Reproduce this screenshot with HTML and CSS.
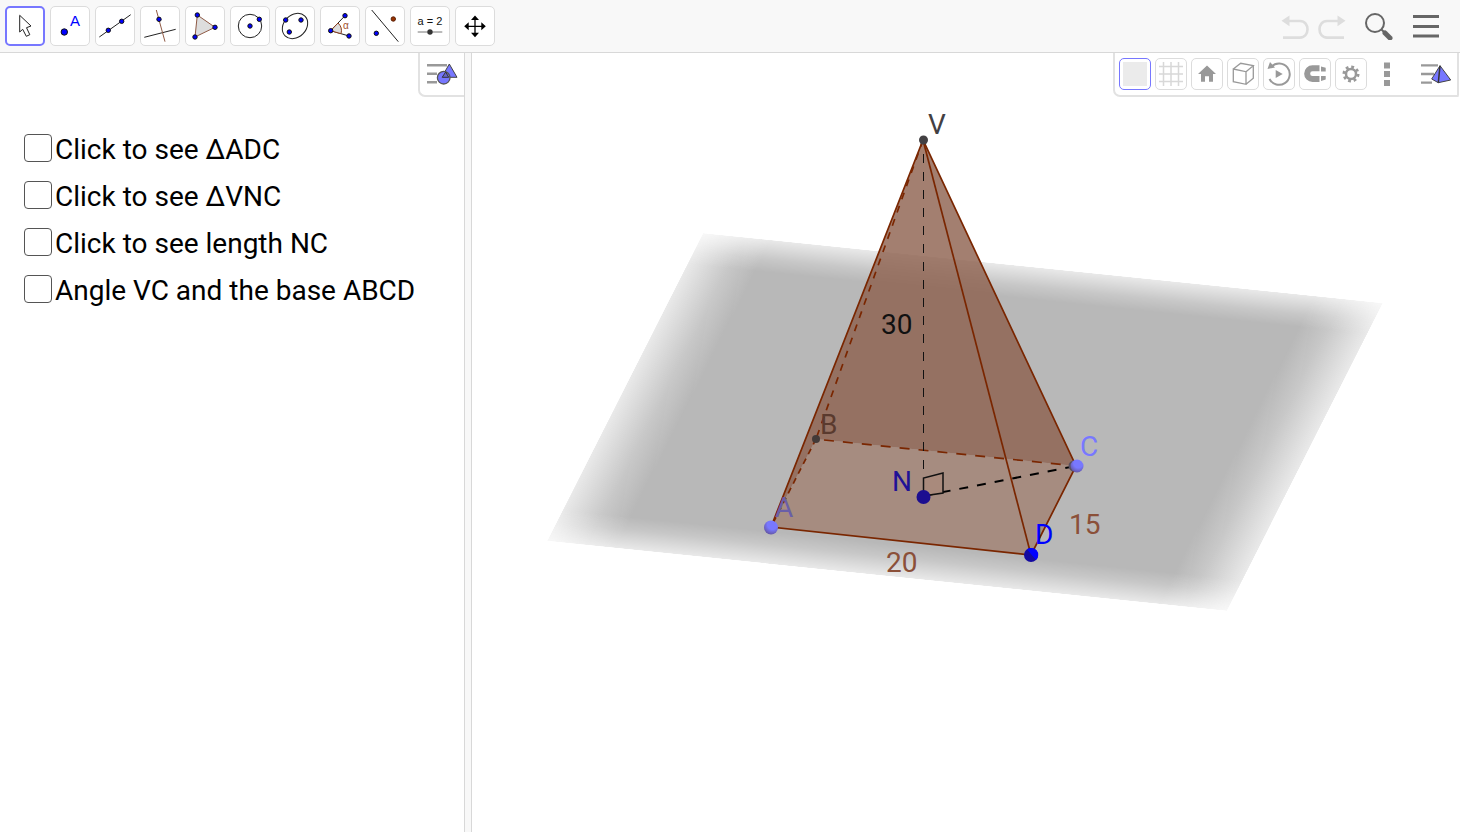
FILE: index.html
```html
<!DOCTYPE html>
<html lang="en">
<head>
  <meta charset="UTF-8" />
  <title>Pyramid VABCD</title>
  <link rel="stylesheet" href="styles.css">
</head>
<body>

  <header class="toolbar">
    <div class="tools">
      <button type="button" class="tool selected" aria-label="Move">
        <svg viewBox="4 4 32 32"><path d="M14.7 9.3V26l3-2.7 3.6 7 3.5-1.6-3.3-7L26 20z" fill="#fff" stroke="#222"/></svg>
      </button>
      <button type="button" class="tool" aria-label="Point">
        <svg viewBox="4 4 32 32"><circle class="pt" cx="14.3" cy="26" r="3.2"/><text x="20" y="20" font-size="15" fill="#00f">A</text></svg>
      </button>
      <button type="button" class="tool" aria-label="Line">
        <svg viewBox="4 4 32 32"><path class="ln" d="M4.3 31 35.7 8.7"/><circle class="pt" cx="13.3" cy="24.3" r="2.2"/><circle class="pt" cx="26.7" cy="15.3" r="2.2"/></svg>
      </button>
      <button type="button" class="tool" aria-label="Perpendicular line">
        <svg viewBox="4 4 32 32"><path class="ln" d="M4.3 31.3 35.7 23.3"/><path class="ln brown" d="M16.3 4 25 35.7"/><circle class="pt" cx="19" cy="13.3" r="2.2"/></svg>
      </button>
      <button type="button" class="tool" aria-label="Polygon">
        <svg viewBox="4 4 32 32"><path class="ln brown filled" d="M12.3 9 30 21.3 10 31z"/><circle class="pt" cx="12.3" cy="9" r="2.2"/><circle class="pt" cx="30" cy="21.3" r="2.2"/><circle class="pt" cx="10" cy="31" r="2.2"/></svg>
      </button>
      <button type="button" class="tool" aria-label="Circle">
        <svg viewBox="4 4 32 32"><circle class="ln" cx="20" cy="20" r="11.7"/><circle class="pt" cx="20" cy="20" r="2.2"/><circle class="pt" cx="29.3" cy="13.3" r="2.2"/></svg>
      </button>
      <button type="button" class="tool" aria-label="Ellipse">
        <svg viewBox="4 4 32 32"><ellipse class="ln" cx="20" cy="20" rx="14" ry="11.2" transform="rotate(-45 20 20)"/><circle class="pt" cx="10.7" cy="14" r="2.2"/><circle class="pt" cx="26" cy="14" r="2.2"/><circle class="pt" cx="14.3" cy="26" r="2.2"/></svg>
      </button>
      <button type="button" class="tool" aria-label="Angle">
        <svg viewBox="4 4 32 32"><path class="ln" d="M25 9.7 10.7 24.7 29 30"/><path d="M10.7 24.7 18 17a10.7 10.7 0 0 1 3 10.7z" fill="#ddd" stroke="#8a3c1c"/><circle class="pt" cx="10.7" cy="24.7" r="2.2"/><circle class="pt" cx="25" cy="9.7" r="2.2"/><circle class="pt" cx="29" cy="30" r="2.2"/><text x="23" y="23" font-size="10" fill="#a0522d">α</text></svg>
      </button>
      <button type="button" class="tool" aria-label="Reflect about line">
        <svg viewBox="4 4 32 32"><path class="ln" d="M6.7 4 33.3 35.7"/><circle class="pt" cx="11.3" cy="27.3" r="2.2"/><circle cx="28.3" cy="13" r="2.2" fill="#993300" stroke="#5a2008"/></svg>
      </button>
      <button type="button" class="tool" aria-label="Slider">
        <svg viewBox="4 4 32 32"><text x="20" y="19" font-size="11" text-anchor="middle" fill="#111">a = 2</text><path d="M7.7 26h24.6" stroke="#777"/><circle cx="20" cy="26" r="2.7" fill="#333"/></svg>
      </button>
      <button type="button" class="tool" aria-label="Move graphics view">
        <svg viewBox="4 4 32 32"><path d="M20 12v17M12 20.3h16" stroke="#000" stroke-width="1.3"/><path d="M20 9.5l4 4.5h-8zM20 31.2l4-4.5h-8zM9.2 20.3l4.5-4v8zM30.8 20.3l-4.5-4v8z"/></svg>
      </button>
    </div>

    <nav class="menu">
      <button type="button" class="undo" aria-label="Undo">
        <svg viewBox="0 0 28 28"><path d="M8 9h11c10 0 10 16.600 0 16.600H2" fill="none" stroke="#ddd" stroke-width="2.600"/><path d="M0.500 8.700 8.500 3.500v10.700z" fill="#ddd"/></svg>
      </button>
      <button type="button" class="redo" aria-label="Redo">
        <svg viewBox="0 0 28 28"><path d="M20 9H9c-10 0-10 16.600 0 16.600h17" fill="none" stroke="#ddd" stroke-width="2.600"/><path d="M27.500 8.700 19.500 3.500v10.700z" fill="#ddd"/></svg>
      </button>
      <button type="button" class="search" aria-label="Search">
        <svg viewBox="0 0 28 28"><circle cx="10" cy="11" r="9" fill="none" stroke="#666" stroke-width="2"/><path d="M16.500 17.500l4 4" stroke="#666" stroke-width="2"/><path d="M20 21l5 5" stroke="#666" stroke-width="5" stroke-linecap="round"/></svg>
      </button>
      <button type="button" class="main-menu" aria-label="Menu">
        <svg viewBox="0 0 28 28"><path d="M1 4.500h26M1 14.500h26M1 24h26" stroke="#666" stroke-width="3"/></svg>
      </button>
    </nav>
  </header>

  <main class="views">
    <section class="pane graphics">
      <div class="stylebar-small">
        <button type="button" class="style-btn" aria-label="Graphics style bar">
          <svg viewBox="0 0 32 32">
            <path d="M0 7.300h20M0 15.700h10M0 24.300h10" stroke="#999" stroke-width="2.600"/>
            <path d="M22.300 6 30 19.300H14.700z" fill="#7777ff" stroke="#444"/>
            <circle cx="16.700" cy="19.700" r="6.300" fill="#7777ff" stroke="#555" stroke-width="1.300"/>
            <path d="M18.700 14l3 5.300h-6.500z" fill="#6666cc" stroke="#333"/>
          </svg>
        </button>
      </div>
      <form class="checks">
        <label class="check"><input type="checkbox"><span>Click to see ΔADC</span></label>
        <label class="check"><input type="checkbox"><span>Click to see ΔVNC</span></label>
        <label class="check"><input type="checkbox"><span>Click to see length NC</span></label>
        <label class="check"><input type="checkbox"><span>Angle VC and the base ABCD</span></label>
      </form>
    </section>

    <div class="splitter"></div>

    <section class="pane graphics3d">
      <svg class="scene" viewBox="472 53 988 779">
        <defs>
          <linearGradient id="fadeU">
            <stop offset="0" stop-color="#b8b8b8" stop-opacity="0.3"/>
            <stop offset="0.06" stop-color="#b8b8b8" stop-opacity="0.78"/>
            <stop offset="0.1" stop-color="#b8b8b8"/>
            <stop offset="0.9" stop-color="#b8b8b8"/>
            <stop offset="0.94" stop-color="#b8b8b8" stop-opacity="0.78"/>
            <stop offset="1" stop-color="#b8b8b8" stop-opacity="0.3"/>
          </linearGradient>
          <linearGradient id="fadeV" x2="0" y2="1">
            <stop offset="0" stop-color="#fff" stop-opacity="0.3"/>
            <stop offset="0.06" stop-color="#fff" stop-opacity="0.78"/>
            <stop offset="0.1" stop-color="#fff"/>
            <stop offset="0.9" stop-color="#fff"/>
            <stop offset="0.94" stop-color="#fff" stop-opacity="0.78"/>
            <stop offset="1" stop-color="#fff" stop-opacity="0.3"/>
          </linearGradient>
          <mask id="planeMask" maskUnits="userSpaceOnUse" x="0" y="0" width="100" height="100">
            <rect width="100" height="100" fill="url(#fadeV)"/>
          </mask>
          <radialGradient id="lightPt" cx="0.6" cy="0.3" r="0.7">
            <stop offset="0.5" stop-color="#7878ff"/>
            <stop offset="1" stop-color="#6558a8"/>
          </radialGradient>
        </defs>

        <!-- xOy plane -->
        <g transform="matrix(6.8 0.7 -1.56 3.08 703 233)">
          <rect width="100" height="100" fill="url(#fadeU)" mask="url(#planeMask)"/>
        </g>

        <!-- faces -->
        <path d="M771 527 816 439 1076 466 1031 555z" fill="#a68c80"/>
        <path d="M923 140 771 527 816 439 1076 466z" fill="#8c5f4c" fill-opacity="0.8"/>

        <!-- hidden edges -->
        <path class="edge" d="M923 140 816 439" stroke-dasharray="7 7"/>
        <path class="edge" d="M816 439 771 527" stroke-dasharray="6 5"/>
        <path class="edge" d="M824 440 1076 466" stroke-dasharray="10 9"/>
        <path d="M923.500 154V490" stroke="#111" stroke-dasharray="9 9"/>
        <path d="M923 496 1076 466" stroke="#000" stroke-width="2" stroke-dasharray="9 9" stroke-dashoffset="-1"/>
        <path d="M923.500 496V478l19.500-5v20l-20 3z" fill="#a98a7c" stroke="#111" stroke-width="1.500"/>

        <!-- visible edges -->
        <path class="edge" d="M923 140 771 527 1031 555 1076 466z"/>
        <path class="edge" d="M923 140 1031 555"/>

        <circle cx="923.500" cy="140" r="4.500" fill="#434043"/>
        <circle cx="816" cy="439" r="4" fill="#433a38"/>
        <circle cx="771" cy="527.500" r="7" fill="url(#lightPt)"/>
        <circle cx="1074" cy="466" r="5.500" fill="#565060"/>
        <circle cx="1077" cy="466" r="6.500" fill="url(#lightPt)"/>
        <circle cx="923.500" cy="497" r="7" fill="#1c0e90"/>
        <circle cx="1031" cy="555" r="7" fill="#1409a0"/>
        <path d="M1027 549.300a7 7 0 0 1 9 10.700z" fill="#0000ff"/>

        <g class="labels">
          <text x="928" y="134" fill="#434043">V</text>
          <text x="881" y="334" fill="#111">30</text>
          <text x="820" y="434" fill="#5a3a2e">B</text>
          <text x="775" y="517" fill="#6a5fa8">A</text>
          <text x="892" y="491" fill="#1f1296">N</text>
          <text x="1080" y="456" fill="#7878ff">C</text>
          <text x="1035" y="544" fill="#0000ff">D</text>
          <text x="1069" y="534" fill="#8b5039">15</text>
          <text x="886" y="572" fill="#8b5039">20</text>
        </g>
      </svg>

      <div class="stylebar">
        <button type="button" class="opt selected" aria-label="Show plane">
          <svg viewBox="2 2 28 28"><path d="M4 4h24v24H4z" fill="#ebebeb"/></svg>
        </button>
        <button type="button" class="opt" aria-label="Show grid">
          <svg viewBox="2 2 28 28"><path d="M8.500 4v24M16 4v24M23.500 4v24M4 8.500h24M4 16h24M4 23.500h24" stroke="#d8d8d8" stroke-width="1.500"/></svg>
        </button>
        <button type="button" class="opt" aria-label="Default view">
          <svg viewBox="2 2 28 28"><path d="M16 7.500l9 8.500h-3v7.700h-4v-5.500h-4v5.500h-4V16H7z" fill="#999"/></svg>
        </button>
        <button type="button" class="opt" aria-label="View direction">
          <svg viewBox="2 2 28 28"><path d="M6.300 11 19 13.700v12.600L6.300 23.700zM6.300 11l7.400-5.700 12.600 2.400L19 13.700M26.300 7.700v12.600L19 26.300" fill="none" stroke="#999" stroke-width="1.300"/></svg>
        </button>
        <button type="button" class="opt" aria-label="Rotate view">
          <svg viewBox="2 2 28 28"><path d="M8.500 8.500A10.700 10.700 0 1 1 6.500 21" fill="none" stroke="#999" stroke-width="2"/><path d="M7 4l5 5.500L4.500 11zM12.700 12v8l7-4z" fill="#999"/></svg>
        </button>
        <button type="button" class="opt" aria-label="Point capturing">
          <svg viewBox="2 2 28 28"><path d="M20.500 10.300h-7a5.300 5.300 0 0 0 0 10.700h7" fill="none" stroke="#999" stroke-width="6"/><path d="M22 8.500l4.700 1.200v3.800H22zM22 18h4.700v3.500L22 23z" fill="#999"/></svg>
        </button>
        <button type="button" class="opt" aria-label="Settings">
          <svg viewBox="2 2 28 28"><circle cx="16" cy="16" r="5" fill="none" stroke="#999" stroke-width="2.500"/><circle cx="16" cy="16" r="7" fill="none" stroke="#999" stroke-width="3" stroke-dasharray="2.75 2.75"/></svg>
        </button>
        <button type="button" class="opt plain" aria-label="More">
          <svg viewBox="2 2 28 28"><path d="M13 4.500h6v6h-6zM13 13h6v6h-6zM13 22h6v6h-6z" fill="#999"/></svg>
        </button>
        <button type="button" class="style-btn" aria-label="3D style bar">
          <svg viewBox="0 0 32 32">
            <path d="M0 7.300h17M0 16h13M0 24.700h11" stroke="#999" stroke-width="2.300"/>
            <path d="M19 7.700 10.700 21l6.600 3.700L29.700 22z" fill="#7777ff" stroke="#444" stroke-linejoin="round"/>
            <path d="M19 7.700l-1.700 17" stroke="#333" stroke-width="1.500"/>
          </svg>
        </button>
      </div>
    </section>
  </main>

</body>
</html>
```
FILE: styles.css
```css
* { box-sizing: border-box; }
body { margin: 0; height: 100vh; display: flex; flex-direction: column; background: #fff; font-family: Roboto, sans-serif; overflow: hidden; }
button { padding: 0; border: none; background: none; display: grid; place-items: center; cursor: pointer; }
svg { display: block; }

/* top toolbar */
.toolbar { display: flex; justify-content: space-between; align-items: center; height: 53px; flex: none; padding: 0 20px 0 5px; background: #f8f8f8; border-bottom: 1px solid #d8d8d8; }
.tools { display: flex; gap: 5px; }
.tool { width: 40px; height: 40px; background: #fff; border: 1px solid #dcdcdc; border-radius: 5px; }
.tool.selected { border: 2px solid #7777ff; }
.tool svg { width: 32px; height: 32px; }
.pt { fill: #0000ff; stroke: #111; }
.ln { fill: none; stroke: #222; }
.ln.brown { stroke: #8f5a45; }
.ln.filled { fill: #ddd; }

.menu { display: flex; gap: 19px; }
.menu svg { width: 28px; height: 28px; }
.undo { margin-right: -10px; }

/* views */
.views { flex: 1; display: flex; min-height: 0; padding-bottom: 2px; }
.pane { position: relative; min-width: 0; }
.graphics { width: 464px; flex: none; }
.graphics3d { flex: 1; }
.splitter { width: 8px; flex: none; background: #f8f8f8; border: 1px solid #d8d8d8; border-width: 0 1px; }

.stylebar-small { position: absolute; top: 0; right: 0; padding: 5px 5px 5px 7px; background: #fff; border: 2px solid #e2e2e2; border-width: 0 0 2px 2px; border-radius: 0 0 0 7px; }
.stylebar { position: absolute; top: 0; right: 1px; display: flex; gap: 4px; padding: 5px 4px; background: #fff; border: 2px solid #e2e2e2; border-top: none; border-radius: 0 0 2px 7px; }
.opt { width: 32px; height: 32px; border: 1px solid #dcdcdc; border-radius: 5px; background: #fff; }
.opt.selected { border-color: #7777ff; }
.opt.plain { border-color: transparent; }
.opt svg { width: 28px; height: 28px; }
.style-btn svg { width: 32px; height: 32px; }
.stylebar .style-btn { margin-left: 14px; }

/* checkboxes */
.checks { display: flex; flex-direction: column; gap: 19px; padding: 81px 0 0 24px; }
.check { display: flex; align-items: center; gap: 3px; height: 28px; font-size: 28px; line-height: 32px; color: #000; white-space: nowrap; }
.check span { padding-top: 3px; }
.check input { appearance: none; width: 28px; height: 28px; margin: 0; flex: none; background: #fff; border: 1px solid #555; border-radius: 4px; }
.check input:checked { background: #7777ff; }

/* 3D scene */
.scene { width: 100%; height: 100%; }
.edge { fill: none; stroke: #7a2600; stroke-width: 1.7px; }
.labels { font-size: 28px; }
```
